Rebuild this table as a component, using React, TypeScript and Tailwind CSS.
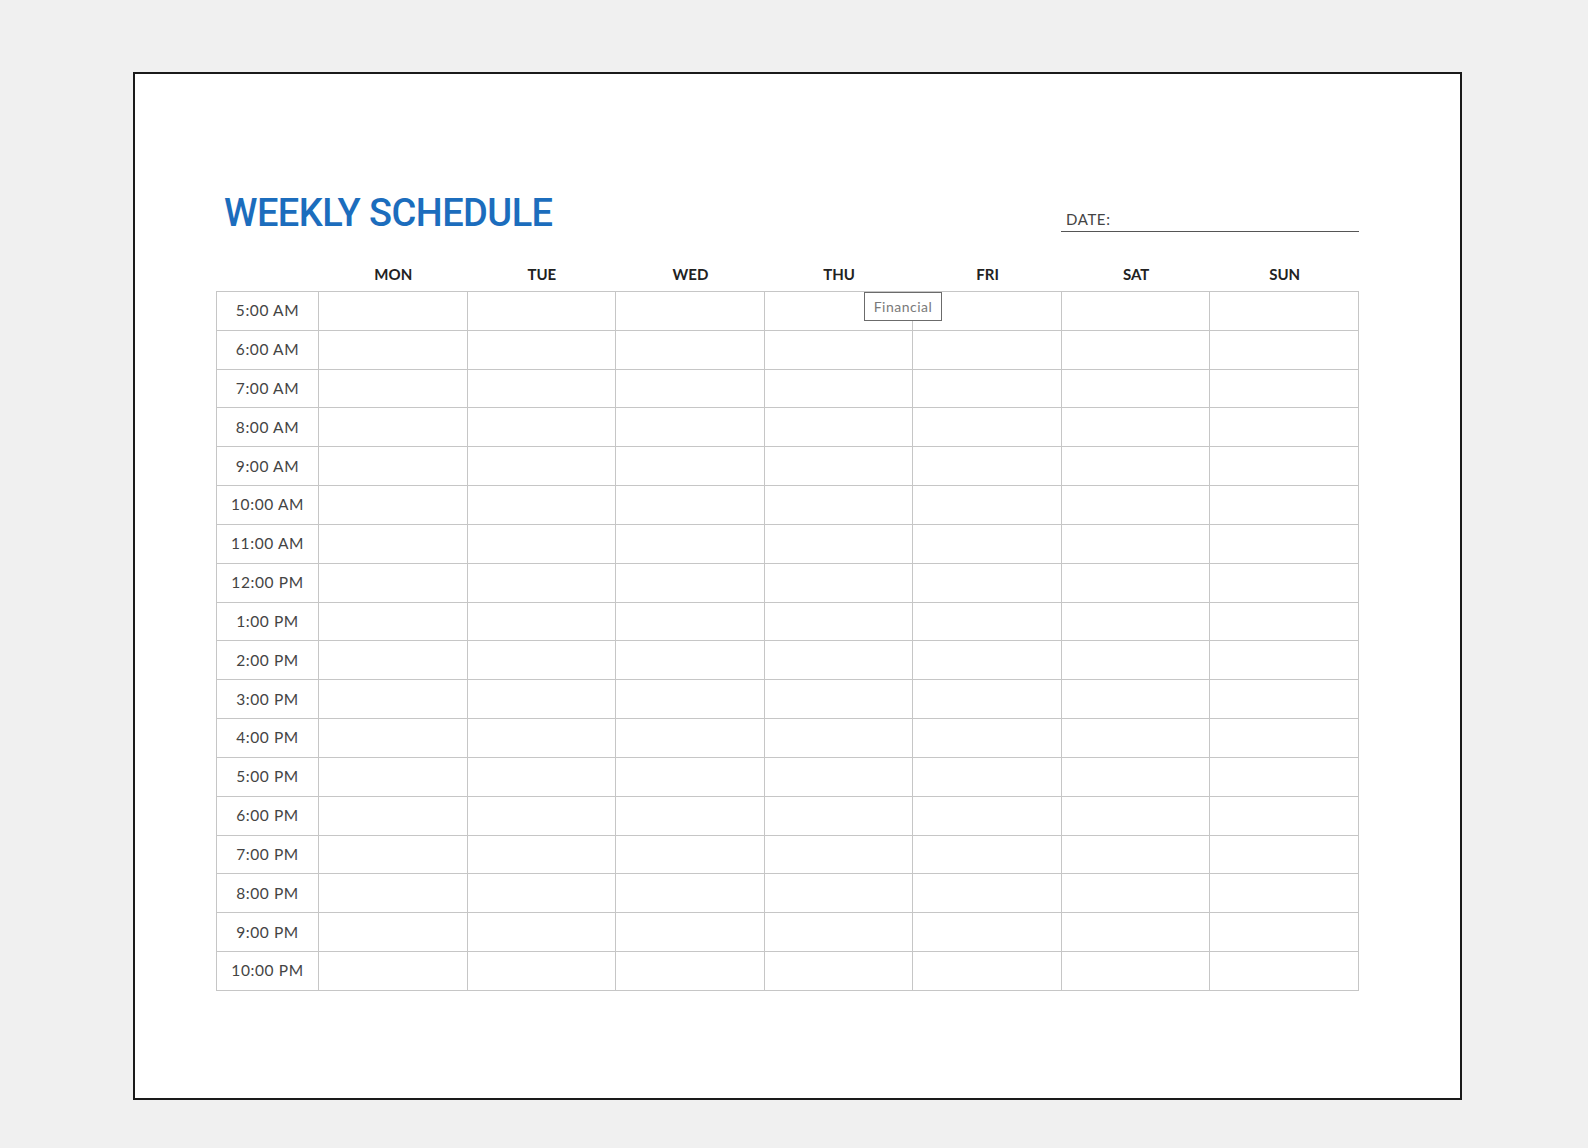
import React from "react";

const days = ["MON", "TUE", "WED", "THU", "FRI", "SAT", "SUN"];
const times = [
  "5:00 AM",
  "6:00 AM",
  "7:00 AM",
  "8:00 AM",
  "9:00 AM",
  "10:00 AM",
  "11:00 AM",
  "12:00 PM",
  "1:00 PM",
  "2:00 PM",
  "3:00 PM",
  "4:00 PM",
  "5:00 PM",
  "6:00 PM",
  "7:00 PM",
  "8:00 PM",
  "9:00 PM",
  "10:00 PM",
];

export default function App() {
  return (
    <div className="min-h-screen w-full bg-[#f0f0f0] pt-[72px] pl-[133px]">
      <div className="w-[1329px] h-[1028px] border-2 border-[#1a1a1a] bg-white pl-[81px] pt-[118px]">
        <div className="w-[1143px]">
          {/* header */}
          <div className="flex items-end justify-between h-[40px]">
            <h1
              className="ml-[8px] text-[38px] leading-[38px] font-medium text-[#1c6dbd] tracking-[-0.55px]"
              style={{ fontFamily: "Roboto, 'DejaVu Sans', sans-serif" }}
            >
              WEEKLY SCHEDULE
            </h1>
            <div
              className="w-[298px] border-b border-[#555] pl-[5px] pb-[3px] text-[15px] leading-[18px] tracking-[0.6px] text-[#444]"
              style={{ fontFamily: "Lato, 'Open Sans', sans-serif" }}
            >
              DATE:
            </div>
          </div>

          {/* day headers */}
          <div
            className="mt-[25px] grid grid-cols-[103px_repeat(7,minmax(0,1fr))] h-[34px] items-center text-[15px] font-bold text-[#222]"
            style={{ fontFamily: "Lato, 'Open Sans', sans-serif" }}
          >
            <div />
            {days.map((d) => (
              <div key={d} className="text-center">
                {d}
              </div>
            ))}
          </div>

          {/* table */}
          <div
            className="relative grid grid-cols-[102px_repeat(7,minmax(0,1fr))] grid-rows-[repeat(18,minmax(0,1fr))] h-[700px] border-t border-l border-[#c6c6c6]"
            style={{ fontFamily: "Lato, 'Open Sans', sans-serif" }}
          >
            {times.map((t) => (
              <React.Fragment key={t}>
                <div className="flex items-center justify-center border-r border-b border-[#c6c6c6] text-[15.5px] tracking-[0.6px] text-[#444]">
                  {t}
                </div>
                {days.map((d) => (
                  <div key={d} className="border-r border-b border-[#c6c6c6]" />
                ))}
              </React.Fragment>
            ))}
            <div className="absolute left-[647px] top-[0px] w-[78px] h-[29px] border border-[#6b6b6b] bg-white flex items-center justify-center text-[14px] tracking-[0.5px] text-[#7a7a7a]">
              Financial
            </div>
          </div>
        </div>
      </div>
    </div>
  );
}
